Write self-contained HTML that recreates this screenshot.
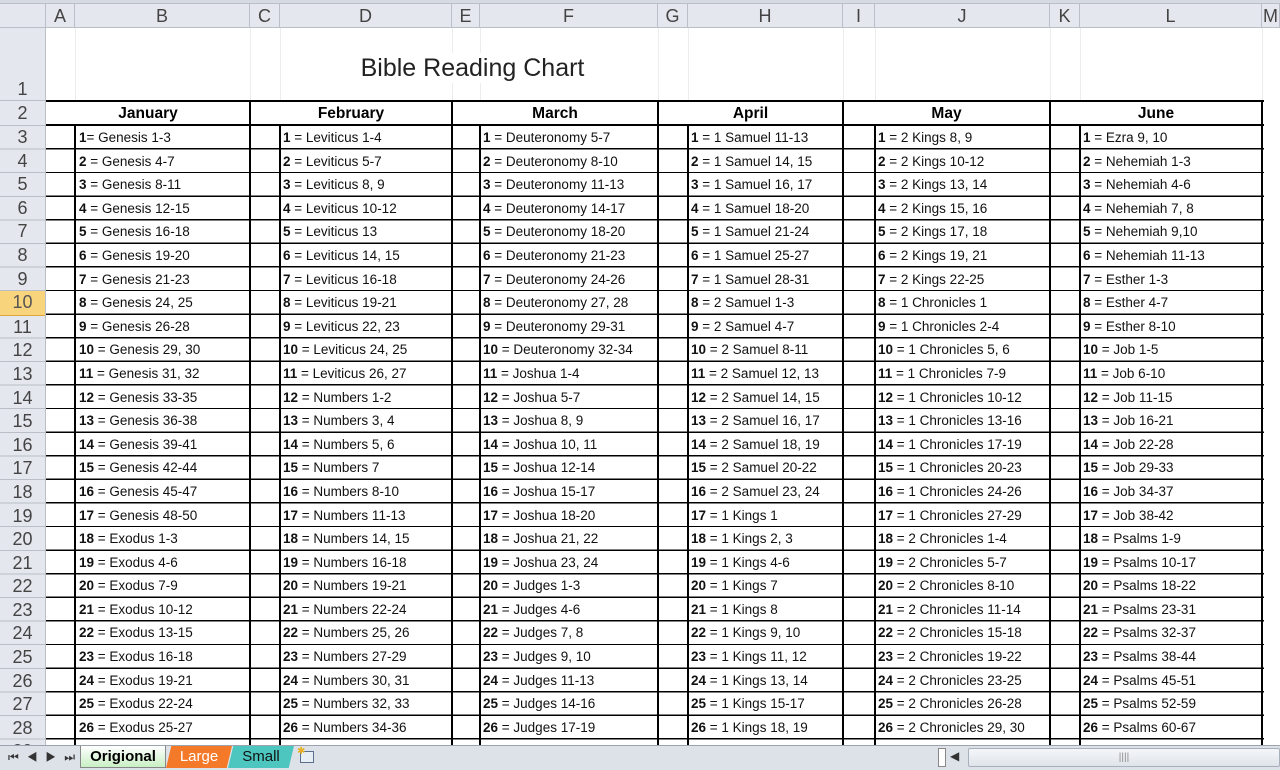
<!DOCTYPE html>
<html><head><meta charset="utf-8"><style>
*{margin:0;padding:0;box-sizing:border-box}
body{width:1280px;height:770px;overflow:hidden;background:#fff;font-family:"Liberation Sans",sans-serif;position:relative}
.abs{position:absolute}
.ch{position:absolute;top:4px;height:24px;background:#e4e8ee;border-right:1px solid #b9bec7;border-bottom:1px solid #b9bec7;color:#444;font-size:18px;text-align:center;line-height:24px}
.rh{position:absolute;left:0;width:46px;background:#e4e8ee;border-right:1px solid #b9bec7;color:#444;font-size:18px;text-align:center}
.col{position:absolute;top:126px;font-size:13.5px;line-height:23.6px;color:#111;white-space:nowrap}
.v{position:absolute;top:101px;width:2px;height:644px;background:#000}
.vt{position:absolute;top:126px;width:2px;height:619px;background:#000}
.mon{position:absolute;top:101px;height:24px;line-height:26px;text-align:center;font-weight:bold;font-size:15.5px}
.gl{position:absolute;top:28px;height:73px;width:1px;background:#ececec}
</style></head><body>
<div class="abs" style="left:0;top:0;width:1280px;height:4px;background:#d6dbe2;border-bottom:1px solid #b9bec7"></div>
<div class="ch" style="left:0;width:46px"></div>
<div class="ch" style="left:46px;width:29px">A</div>
<div class="ch" style="left:75px;width:175px">B</div>
<div class="ch" style="left:250px;width:30px">C</div>
<div class="ch" style="left:280px;width:172px">D</div>
<div class="ch" style="left:452px;width:28px">E</div>
<div class="ch" style="left:480px;width:178px">F</div>
<div class="ch" style="left:658px;width:30px">G</div>
<div class="ch" style="left:688px;width:155px">H</div>
<div class="ch" style="left:843px;width:32px">I</div>
<div class="ch" style="left:875px;width:175px">J</div>
<div class="ch" style="left:1050px;width:30px">K</div>
<div class="ch" style="left:1080px;width:182px">L</div>
<div class="ch" style="left:1262px;width:18px">M</div>
<div class="rh" style="top:28px;height:73px;line-height:22px;padding-top:50px;border-bottom:1px solid #b9bec7">1</div>
<div class="rh" style="top:101px;height:25px;line-height:25px;border-bottom:1px solid #b9bec7">2</div>
<div class="rh" style="top:126px;height:619px;line-height:23.6px;background:repeating-linear-gradient(to bottom,#e4e8ee 0,#e4e8ee 22.6px,#b9bec7 22.6px,#b9bec7 23.6px)">3<br>4<br>5<br>6<br>7<br>8<br>9<br><span style="display:block;background:#f8d47c;color:#555;border-bottom:1px solid #e0a83c">10</span>11<br>12<br>13<br>14<br>15<br>16<br>17<br>18<br>19<br>20<br>21<br>22<br>23<br>24<br>25<br>26<br>27<br>28<br>29</div>
<div class="gl" style="left:75px"></div><div class="gl" style="left:250px"></div><div class="gl" style="left:280px"></div><div class="gl" style="left:452px"></div><div class="gl" style="left:480px"></div><div class="gl" style="left:658px"></div><div class="gl" style="left:688px"></div><div class="gl" style="left:843px"></div><div class="gl" style="left:875px"></div><div class="gl" style="left:1050px"></div><div class="gl" style="left:1080px"></div><div class="gl" style="left:1262px"></div>
<div class="abs" style="left:290px;top:53px;width:365px;text-align:center;font-size:25px;color:#222;background:#fff;line-height:30px">Bible Reading Chart</div>
<div class="abs" style="left:46px;top:100px;width:1218px;height:2px;background:#000"></div>
<div class="abs" style="left:46px;top:124px;width:1218px;height:2px;background:#000"></div>
<div class="abs" style="left:46px;top:126px;width:1218px;height:619px;background:repeating-linear-gradient(to bottom,transparent 0,transparent 22.2px,#000 22.2px,#000 23.6px)"></div>
<div class="v" style="left:249px"></div><div class="v" style="left:451px"></div><div class="v" style="left:657px"></div><div class="v" style="left:842px"></div><div class="v" style="left:1049px"></div><div class="v" style="left:1261px"></div>
<div class="vt" style="left:74px"></div><div class="vt" style="left:279px"></div><div class="vt" style="left:479px"></div><div class="vt" style="left:687px"></div><div class="vt" style="left:874px"></div><div class="vt" style="left:1079px"></div>
<div class="mon" style="left:46px;width:204px">January</div>
<div class="mon" style="left:250px;width:202px">February</div>
<div class="mon" style="left:452px;width:206px">March</div>
<div class="mon" style="left:658px;width:185px">April</div>
<div class="mon" style="left:843px;width:207px">May</div>
<div class="mon" style="left:1050px;width:212px">June</div>
<div class="col" style="left:79px"><b>1</b>= Genesis 1-3<br><b>2</b> = Genesis 4-7<br><b>3</b> = Genesis 8-11<br><b>4</b> = Genesis 12-15<br><b>5</b> = Genesis 16-18<br><b>6</b> = Genesis 19-20<br><b>7</b> = Genesis 21-23<br><b>8</b> = Genesis 24, 25<br><b>9</b> = Genesis 26-28<br><b>10</b> = Genesis 29, 30<br><b>11</b> = Genesis 31, 32<br><b>12</b> = Genesis 33-35<br><b>13</b> = Genesis 36-38<br><b>14</b> = Genesis 39-41<br><b>15</b> = Genesis 42-44<br><b>16</b> = Genesis 45-47<br><b>17</b> = Genesis 48-50<br><b>18</b> = Exodus 1-3<br><b>19</b> = Exodus 4-6<br><b>20</b> = Exodus 7-9<br><b>21</b> = Exodus 10-12<br><b>22</b> = Exodus 13-15<br><b>23</b> = Exodus 16-18<br><b>24</b> = Exodus 19-21<br><b>25</b> = Exodus 22-24<br><b>26</b> = Exodus 25-27<br><b>27</b> = Exodus 28-30</div>
<div class="col" style="left:283px"><b>1</b> = Leviticus 1-4<br><b>2</b> = Leviticus 5-7<br><b>3</b> = Leviticus 8, 9<br><b>4</b> = Leviticus 10-12<br><b>5</b> = Leviticus 13<br><b>6</b> = Leviticus 14, 15<br><b>7</b> = Leviticus 16-18<br><b>8</b> = Leviticus 19-21<br><b>9</b> = Leviticus 22, 23<br><b>10</b> = Leviticus 24, 25<br><b>11</b> = Leviticus 26, 27<br><b>12</b> = Numbers 1-2<br><b>13</b> = Numbers 3, 4<br><b>14</b> = Numbers 5, 6<br><b>15</b> = Numbers 7<br><b>16</b> = Numbers 8-10<br><b>17</b> = Numbers 11-13<br><b>18</b> = Numbers 14, 15<br><b>19</b> = Numbers 16-18<br><b>20</b> = Numbers 19-21<br><b>21</b> = Numbers 22-24<br><b>22</b> = Numbers 25, 26<br><b>23</b> = Numbers 27-29<br><b>24</b> = Numbers 30, 31<br><b>25</b> = Numbers 32, 33<br><b>26</b> = Numbers 34-36<br><b>27</b> = Deuteronomy 1-3</div>
<div class="col" style="left:483px"><b>1</b> = Deuteronomy 5-7<br><b>2</b> = Deuteronomy 8-10<br><b>3</b> = Deuteronomy 11-13<br><b>4</b> = Deuteronomy 14-17<br><b>5</b> = Deuteronomy 18-20<br><b>6</b> = Deuteronomy 21-23<br><b>7</b> = Deuteronomy 24-26<br><b>8</b> = Deuteronomy 27, 28<br><b>9</b> = Deuteronomy 29-31<br><b>10</b> = Deuteronomy 32-34<br><b>11</b> = Joshua 1-4<br><b>12</b> = Joshua 5-7<br><b>13</b> = Joshua 8, 9<br><b>14</b> = Joshua 10, 11<br><b>15</b> = Joshua 12-14<br><b>16</b> = Joshua 15-17<br><b>17</b> = Joshua 18-20<br><b>18</b> = Joshua 21, 22<br><b>19</b> = Joshua 23, 24<br><b>20</b> = Judges 1-3<br><b>21</b> = Judges 4-6<br><b>22</b> = Judges 7, 8<br><b>23</b> = Judges 9, 10<br><b>24</b> = Judges 11-13<br><b>25</b> = Judges 14-16<br><b>26</b> = Judges 17-19<br><b>27</b> = Judges 20-21</div>
<div class="col" style="left:691px"><b>1</b> = 1 Samuel 11-13<br><b>2</b> = 1 Samuel 14, 15<br><b>3</b> = 1 Samuel 16, 17<br><b>4</b> = 1 Samuel 18-20<br><b>5</b> = 1 Samuel 21-24<br><b>6</b> = 1 Samuel 25-27<br><b>7</b> = 1 Samuel 28-31<br><b>8</b> = 2 Samuel 1-3<br><b>9</b> = 2 Samuel 4-7<br><b>10</b> = 2 Samuel 8-11<br><b>11</b> = 2 Samuel 12, 13<br><b>12</b> = 2 Samuel 14, 15<br><b>13</b> = 2 Samuel 16, 17<br><b>14</b> = 2 Samuel 18, 19<br><b>15</b> = 2 Samuel 20-22<br><b>16</b> = 2 Samuel 23, 24<br><b>17</b> = 1 Kings 1<br><b>18</b> = 1 Kings 2, 3<br><b>19</b> = 1 Kings 4-6<br><b>20</b> = 1 Kings 7<br><b>21</b> = 1 Kings 8<br><b>22</b> = 1 Kings 9, 10<br><b>23</b> = 1 Kings 11, 12<br><b>24</b> = 1 Kings 13, 14<br><b>25</b> = 1 Kings 15-17<br><b>26</b> = 1 Kings 18, 19<br><b>27</b> = 1 Kings 20-21</div>
<div class="col" style="left:878px"><b>1</b> = 2 Kings 8, 9<br><b>2</b> = 2 Kings 10-12<br><b>3</b> = 2 Kings 13, 14<br><b>4</b> = 2 Kings 15, 16<br><b>5</b> = 2 Kings 17, 18<br><b>6</b> = 2 Kings 19, 21<br><b>7</b> = 2 Kings 22-25<br><b>8</b> = 1 Chronicles 1<br><b>9</b> = 1 Chronicles 2-4<br><b>10</b> = 1 Chronicles 5, 6<br><b>11</b> = 1 Chronicles 7-9<br><b>12</b> = 1 Chronicles 10-12<br><b>13</b> = 1 Chronicles 13-16<br><b>14</b> = 1 Chronicles 17-19<br><b>15</b> = 1 Chronicles 20-23<br><b>16</b> = 1 Chronicles 24-26<br><b>17</b> = 1 Chronicles 27-29<br><b>18</b> = 2 Chronicles 1-4<br><b>19</b> = 2 Chronicles 5-7<br><b>20</b> = 2 Chronicles 8-10<br><b>21</b> = 2 Chronicles 11-14<br><b>22</b> = 2 Chronicles 15-18<br><b>23</b> = 2 Chronicles 19-22<br><b>24</b> = 2 Chronicles 23-25<br><b>25</b> = 2 Chronicles 26-28<br><b>26</b> = 2 Chronicles 29, 30<br><b>27</b> = 2 Chronicles 31-33</div>
<div class="col" style="left:1083px"><b>1</b> = Ezra 9, 10<br><b>2</b> = Nehemiah 1-3<br><b>3</b> = Nehemiah 4-6<br><b>4</b> = Nehemiah 7, 8<br><b>5</b> = Nehemiah 9,10<br><b>6</b> = Nehemiah 11-13<br><b>7</b> = Esther 1-3<br><b>8</b> = Esther 4-7<br><b>9</b> = Esther 8-10<br><b>10</b> = Job 1-5<br><b>11</b> = Job 6-10<br><b>12</b> = Job 11-15<br><b>13</b> = Job 16-21<br><b>14</b> = Job 22-28<br><b>15</b> = Job 29-33<br><b>16</b> = Job 34-37<br><b>17</b> = Job 38-42<br><b>18</b> = Psalms 1-9<br><b>19</b> = Psalms 10-17<br><b>20</b> = Psalms 18-22<br><b>21</b> = Psalms 23-31<br><b>22</b> = Psalms 32-37<br><b>23</b> = Psalms 38-44<br><b>24</b> = Psalms 45-51<br><b>25</b> = Psalms 52-59<br><b>26</b> = Psalms 60-67<br><b>27</b> = Psalms 68-71</div>
<div class="abs" style="left:0;top:745px;width:1280px;height:25px;background:#dde2e9;border-top:1px solid #9aa3ae"></div>
<div class="abs" style="left:8px;top:750px;font-size:12px;color:#333;letter-spacing:8px">⏮◀▶⏭</div>
<div class="abs" style="left:80px;top:746px;width:86px;height:22px;background:linear-gradient(#fff,#c9f0c4);border:1px solid #888;border-top:none;font-weight:bold;font-size:15px;text-align:center;line-height:21px">Origional</div>
<div class="abs" style="left:166px;top:746px;width:66px;height:22px;background:#f47a2a;color:#fff;font-size:15px;text-align:center;line-height:21px;clip-path:polygon(8% 0,100% 0,92% 100%,0 100%)">Large</div>
<div class="abs" style="left:228px;top:746px;width:66px;height:22px;background:#4dc6c0;color:#111;font-size:15px;text-align:center;line-height:21px;clip-path:polygon(8% 0,100% 0,92% 100%,0 100%)">Small</div>
<div class="abs" style="left:300px;top:751px;width:14px;height:12px;border:1px solid #5a6f8c;background:#e8eef6"></div>
<div class="abs" style="left:297px;top:746px;color:#e8b020;font-size:10px">✱</div>
<div class="abs" style="left:938px;top:748px;width:8px;height:19px;background:#fff;border:1px solid #888"></div>
<div class="abs" style="left:950px;top:749px;font-size:12px;color:#333">◀</div>
<div class="abs" style="left:968px;top:748px;width:312px;height:19px;background:linear-gradient(#f4f6f9,#dfe4ea);border:1px solid #a8b0bb;border-radius:2px;text-align:center;font-size:10px;color:#888;line-height:17px">||||</div>
</body></html>
